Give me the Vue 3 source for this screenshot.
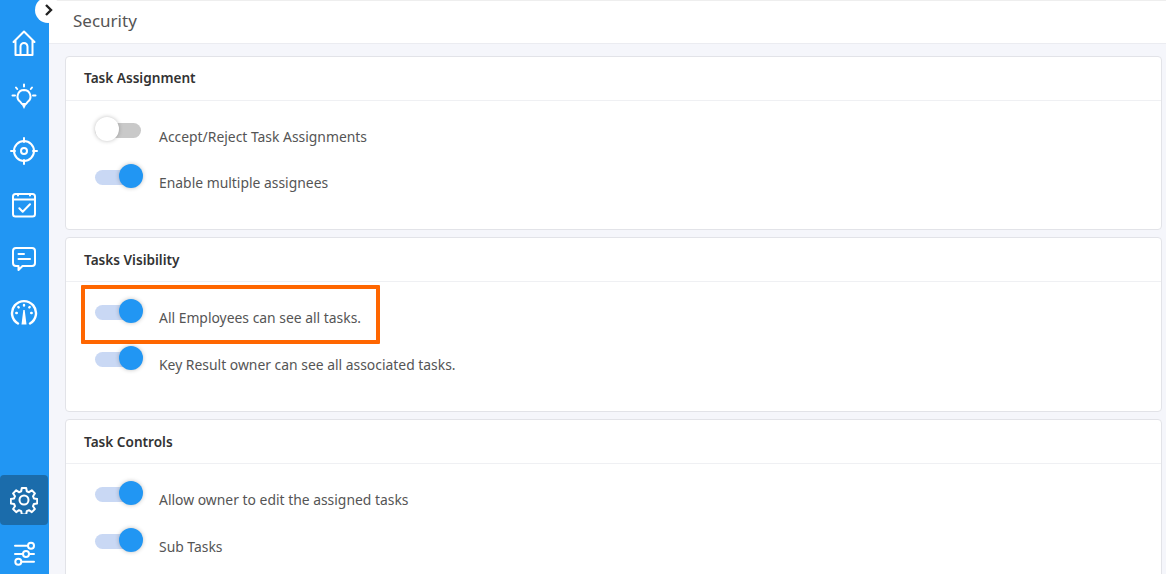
<script setup>
const cards = [
  { title: 'Task Assignment', height: 174, first: true, rows: [
    { label: 'Accept/Reject Task Assignments', on: false },
    { label: 'Enable multiple assignees', on: true },
  ] },
  { title: 'Tasks Visibility', height: 175, highlight: true, rows: [
    { label: 'All Employees can see all tasks.', on: true },
    { label: 'Key Result owner can see all associated tasks.', on: true },
  ] },
  { title: 'Task Controls', height: 175, rows: [
    { label: 'Allow owner to edit the assigned tasks', on: true },
    { label: 'Sub Tasks', on: true },
  ] },
]
</script>

<template>
  <div class="page">
    <aside class="side">
      <button class="collapse" aria-label="Collapse">
        <svg width="12" height="14" viewBox="0 0 12 14"><path d="M4 2l5 5-5 5" fill="none" stroke="#222" stroke-width="2.4"/></svg>
      </button>
      <nav class="nav">
        <div class="item">
          <svg viewBox="0 0 28 28" class="ic"><path d="M3.500 12 14 1.500 24.500 12M5.500 10.500V25h17V10.500M10.500 25v-8.500a3.500 3.500 0 0 1 7 0V25"/></svg>
        </div>
        <div class="item">
          <svg viewBox="0 0 28 28" class="ic"><path d="M14 7a6.500 6.500 0 0 0-3.700 11.800L12 21h4l1.700-2.200A6.500 6.500 0 0 0 14 7Z"/><path class="fill" d="M11.500 21h5L14 26Z"/><path d="M14 1.500v2M6 4.500l1.200 1.500M22 4.500 20.800 6M2.500 12.500H5M23 12.500h2.500"/></svg>
        </div>
        <div class="item">
          <svg viewBox="0 0 28 28" class="ic"><circle cx="14" cy="14" r="10"/><circle cx="14" cy="14" r="3"/><path d="M14 1v4M14 23v4M1 14h4M23 14h4"/></svg>
        </div>
        <div class="item">
          <svg viewBox="0 0 28 28" class="ic"><rect x="3" y="3" width="22" height="22.500" rx="2.500"/><path d="M3 8.500h22M8 3v1.500M20 3v1.500M9.300 17.300l3.400 3.400 7.300-7.400"/></svg>
        </div>
        <div class="item">
          <svg viewBox="0 0 28 28" class="ic"><path d="M6 4h16a3 3 0 0 1 3 3v12a3 3 0 0 1-3 3H12.500L8.500 26V22H6a3 3 0 0 1-3-3V7a3 3 0 0 1 3-3ZM8.500 10H14M8.500 15H20"/></svg>
        </div>
        <div class="item">
          <svg viewBox="0 0 28 28" class="ic thick"><path d="M8 25.500a12 12 0 1 1 12 0"/><path class="fill" d="M11.500 26.500 13.300 12h1.400l1.800 14.500Z"/><path d="M14 7v.5M8.300 9l.4.4M19.700 9l-.4.4M6.300 15h.5M21.200 15h.5"/></svg>
        </div>
      </nav>
      <div class="nav-bottom">
        <div class="item item-active">
          <svg viewBox="0 0 28 28" class="ic"><circle cx="14" cy="14" r="4.500"/><path d="M11.800 2h4.400l.6 3.300 2.200.9 2.800-1.900 3.100 3.100-1.900 2.800.9 2.200 3.300.6v4.400l-3.300.6-.9 2.200 1.900 2.800-3.100 3.100-2.800-1.900-2.200.9-.6 3.300h-4.400l-.6-3.300-2.200-.9-2.800 1.900-3.100-3.100 1.900-2.800-.9-2.200-3.300-.6v-4.400l3.300-.6.9-2.200-1.900-2.800 3.100-3.100 2.800 1.900 2.200-.9Z"/></svg>
        </div>
        <div class="item">
          <svg viewBox="0 0 28 28" class="ic"><path d="M5 6.700h12M5 15h7.700M19 15h5M12 22.700h12"/><circle cx="21" cy="6.700" r="3"/><circle cx="16" cy="15" r="3"/><circle cx="8.300" cy="22.700" r="3"/></svg>
        </div>
      </div>
    </aside>

    <main class="main">
      <header class="top"><h1>Security</h1></header>
      <div class="cards">
        <section v-for="c in cards" :key="c.title" class="card" :class="{ first: c.first }" :style="{ height: c.height + 'px' }">
          <h2>{{ c.title }}</h2>
          <div class="body">
            <div v-if="c.highlight" class="mark"></div>
            <div v-for="r in c.rows" :key="r.label" class="row">
              <span class="toggle" :class="{ on: r.on }"><i></i></span>
              <span class="label">{{ r.label }}</span>
            </div>
          </div>
        </section>
      </div>
    </main>
  </div>
</template>

<style>
html, body { margin: 0; overflow: hidden; }
</style>

<style scoped>
.page {
  display: flex;
  height: 574px;
  width: 1166px;
  overflow: hidden;
  background: #f5f6fb;
  font-family: "Noto Sans", "Liberation Sans", sans-serif;
}
.side {
  position: relative;
  flex: 0 0 49px;
  background: #2196f3;
  display: flex;
  flex-direction: column;
  padding-top: 17px;
  box-sizing: border-box;
  z-index: 2;
}
.collapse {
  position: absolute;
  left: 35px;
  top: -3px;
  width: 26px;
  height: 26px;
  border: 0;
  padding: 0;
  border-radius: 50%;
  background: #fff;
  display: flex;
  align-items: center;
  justify-content: center;
}
.nav { display: flex; flex-direction: column; }
.nav .item { height: 53.6px; }
.nav-bottom { margin-top: auto; display: flex; flex-direction: column; gap: 3px; margin-bottom: -4px; }
.item {
  width: 48px;
  height: 50px;
  display: flex;
  align-items: center;
  justify-content: center;
  box-sizing: border-box;
}
.item-active { background: #1b6cab; border-radius: 4px; }
.ic {
  width: 28px;
  height: 28px;
  fill: none;
  stroke: #fff;
  stroke-width: 2;
  stroke-linejoin: round;
  stroke-linecap: round;
}
.ic.thick { stroke-width: 2.4; }
.ic .fill { fill: #fff; stroke: none; }
.main { flex: 1; min-width: 0; display: flex; flex-direction: column; }
.top {
  height: 44px;
  flex: none;
  box-sizing: border-box;
  background: #fff;
  border-top: 1px solid #eeeeee;
  border-bottom: 1px solid #ebecf1;
  padding: 0 0 4px 24px;
  display: flex;
  align-items: center;
}
h1 { margin: 0; font-size: 17px; font-weight: 400; color: #555; }
.cards {
  padding: 12px 4px 0 16px;
  display: flex;
  flex-direction: column;
  gap: 7px;
}
.card {
  flex: none;
  box-sizing: border-box;
  background: #fff;
  border: 1px solid #e2e3e8;
  border-radius: 4px;
}
h2 {
  margin: 0;
  height: 44px;
  box-sizing: border-box;
  border-bottom: 1px solid #eff0f3;
  padding-left: 18px;
  display: flex;
  align-items: center;
  font-size: 13.6px;
  font-weight: 600;
  color: #333;
}
.card.first h2 { padding-bottom: 2px; }
.body { position: relative; padding: 17px 0 0 29px; }
.card.first .body { padding-top: 16px; }
.row {
  display: flex;
  align-items: flex-start;
  height: 47px;
}
.toggle {
  position: relative;
  width: 46px;
  height: 15px;
  margin-top: 6px;
  border-radius: 8px;
  background: #c9c9c9;
}
.toggle i {
  position: absolute;
  left: 0;
  top: -6px;
  width: 24px;
  height: 24px;
  border-radius: 50%;
  background: #fff;
  box-shadow: 0 0 4px rgba(0,0,0,.25);
}
.toggle.on { background: #c9d8f4; }
.toggle.on i { left: 24px; background: #2196f3; }
.label {
  margin-left: 18px;
  margin-top: 10px;
  font-size: 13.9px;
  line-height: 18px;
  color: #555;
}
.card.first .row:first-child .label { margin-top: 11px; }
.mark {
  position: absolute;
  left: 15px;
  top: 3px;
  width: 299px;
  height: 59px;
  box-sizing: border-box;
  border: 4px solid #ff6600;
  border-radius: 1px;
}
</style>
